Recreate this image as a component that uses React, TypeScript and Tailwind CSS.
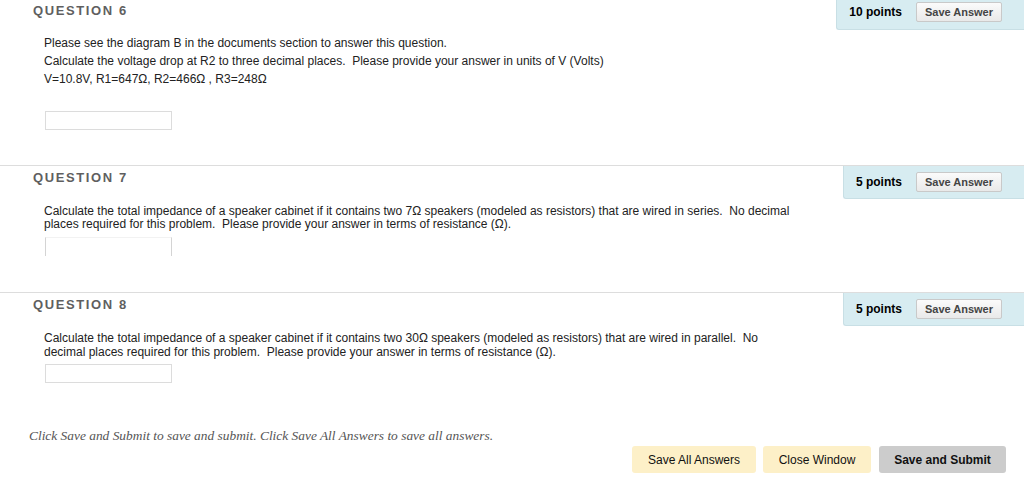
const sans = { fontFamily: '"Liberation Sans", Arial, sans-serif' };

function PointsBox({ points, tall }: { points: string; tall?: boolean }) {
  return (
    <div
      className={`flex items-center bg-[#d7ecf1] border-b border-l border-[#c8dfe5] rounded-bl-[3px] pl-[12px] pr-[22px] ${
        tall ? "h-[33px]" : "h-[30px] pb-[5px]"
      }`}
    >
      <span className="text-[12px] font-bold text-black mr-[14px]">{points}</span>
      <button className="h-[20px] px-[8px] text-[11px] font-bold text-[#444] border border-[#c9c9c9] rounded-[2px] bg-gradient-to-b from-[#fbfbfb] to-[#e9e9e9]">
        Save Answer
      </button>
    </div>
  );
}

function Heading({ children }: { children: React.ReactNode }) {
  return (
    <h2 className="pl-[33px] text-[13px] leading-[16px] font-bold tracking-[1.6px] text-[#5f5f5f]">
      {children}
    </h2>
  );
}

function AnswerInput({ open }: { open?: boolean }) {
  return (
    <input
      type="text"
      className={`block ml-[45px] w-[127px] h-[19px] border bg-white outline-none ${
        open ? "border-[#d4d4d4] border-t-[#f2f2f2] border-b-0" : "border-[#dcdcdc]"
      }`}
    />
  );
}

export default function App() {
  return (
    <div className="w-[1024px] h-[484px] bg-white overflow-hidden text-[#222]" style={sans}>
      {/* question 6 */}
      <section className="h-[165px]">
        <div className="flex justify-between items-start">
          <div className="pt-[3px]">
            <Heading>QUESTION 6</Heading>
          </div>
          <PointsBox points="10 points" />
        </div>
        <div className="pl-[44px] mt-[4px] text-[12px] leading-[18px] text-[#222]">
          <p>Please see the diagram B in the documents section to answer this question.</p>
          <p>Calculate the voltage drop at R2 to three decimal places.&nbsp; Please provide your answer in units of V (Volts)</p>
          <p>V=10.8V, R1=647Ω, R2=466Ω , R3=248Ω</p>
        </div>
        <div className="mt-[23px]">
          <AnswerInput />
        </div>
      </section>

      {/* question 7 */}
      <section className="h-[127px] border-t border-[#dddddd]">
        <div className="flex justify-between items-start">
          <div className="pt-[4px]">
            <Heading>QUESTION 7</Heading>
          </div>
          <PointsBox points="5 points" tall />
        </div>
        <div className="ml-[44px] mt-[6px] text-[12px] leading-[13px] w-[752px]">
          <p>
            Calculate the total impedance of a speaker cabinet if it contains two 7Ω speakers (modeled as resistors) that are wired in series.&nbsp; No decimal places required for this problem.&nbsp; Please provide your answer in terms of resistance (Ω).
          </p>
        </div>
        <div className="mt-[6px]">
          <AnswerInput open />
        </div>
      </section>

      {/* question 8 */}
      <section className="h-[126px] border-t border-[#dddddd]">
        <div className="flex justify-between items-start">
          <div className="pt-[4px]">
            <Heading>QUESTION 8</Heading>
          </div>
          <PointsBox points="5 points" tall />
        </div>
        <div className="ml-[44px] mt-[5px] text-[12px] leading-[14px] w-[752px]">
          <p>
            Calculate the total impedance of a speaker cabinet if it contains two 30Ω speakers (modeled as resistors) that are wired in parallel.&nbsp; No decimal places required for this problem.&nbsp; Please provide your answer in terms of resistance (Ω).
          </p>
        </div>
        <div className="mt-[5px]">
          <AnswerInput />
        </div>
      </section>

      {/* footer */}
      <div className="pl-[29px] mt-[10px]">
        <p
          className="italic text-[13.4px] leading-[16px] text-[#555]"
          style={{ fontFamily: '"Liberation Serif", Georgia, serif' }}
        >
          Click Save and Submit to save and submit. Click Save All Answers to save all answers.
        </p>
      </div>
      <div className="flex justify-end gap-[7px] pr-[18px] mt-[2px]">
        <button className="w-[124px] h-[27px] rounded-[3px] bg-[#fdf0c8] text-[12px] text-[#111]">
          Save All Answers
        </button>
        <button className="w-[108px] h-[27px] rounded-[3px] bg-[#fdf0c8] text-[12px] text-[#111]">
          Close Window
        </button>
        <button className="ml-[1px] w-[127px] h-[27px] rounded-[3px] bg-[#cccccc] text-[12px] font-bold text-[#111]">
          Save and Submit
        </button>
      </div>
    </div>
  );
}
